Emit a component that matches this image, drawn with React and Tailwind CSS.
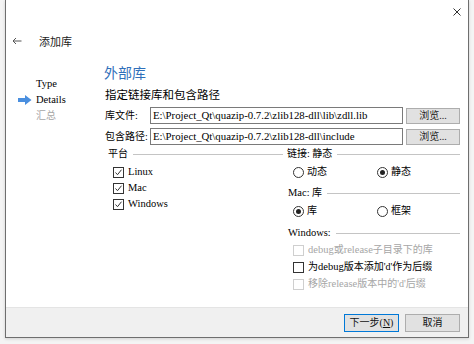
import React from 'react';

const L = ({ children }) => <span className="text-[10.5px] font-['Liberation_Serif',serif]">{children}</span>;

const Check = ({ checked, disabled }) => (
    <span className={`w-[11px] h-[11px] border ${disabled ? 'border-[#cfcfcf]' : 'border-[#333333]'} bg-white flex items-center justify-center shrink-0`}>
        {checked && (
            <svg width="9" height="9" viewBox="0 0 9 9">
                <path d="M1.5 4.5l2 2.2 4-5" stroke="#333" fill="none" strokeWidth="1" />
            </svg>
        )}
    </span>
);

const Radio = ({ checked }) => (
    <span className="w-[11px] h-[11px] rounded-full border border-[#333333] bg-white flex items-center justify-center shrink-0">
        {checked && <span className="w-[5px] h-[5px] rounded-full bg-[#222222]" />}
    </span>
);

const GroupTitle = ({ children }) => (
    <div className="flex items-center h-[14px]">
        <span className="whitespace-nowrap">{children}</span>
        <span className="flex-1 h-px bg-[#c4c4c4] ml-[5px]" />
    </div>
);

const CheckRow = ({ checked, disabled, children, className = '' }) => (
    <div className={`flex items-center gap-[4px] h-[16px] ${disabled ? 'text-[#a6a6a6]' : 'text-black'} ${className}`}>
        <Check checked={checked} disabled={disabled} />
        <span className="whitespace-nowrap">{children}</span>
    </div>
);

const RadioRow = ({ left, right, leftOn }) => (
    <div className="flex items-center h-[16px] pl-[6px]">
        <div className="w-[84px] flex items-center gap-[3px]">
            <Radio checked={leftOn} />
            <span>{left}</span>
        </div>
        <div className="flex items-center gap-[3px]">
            <Radio checked={!leftOn} />
            <span>{right}</span>
        </div>
    </div>
);

const PathRow = ({ label, value, className = '' }) => (
    <div className={`flex items-center h-[17px] ${className}`}>
        <span className="w-[45px] whitespace-nowrap">{label}</span>
        <div className="flex-1 h-[17px] border border-[#7a7a7a] bg-white flex items-center pl-[2px] overflow-hidden">
            <span className="text-[10.8px] font-['Liberation_Serif',serif] whitespace-nowrap">{value}</span>
        </div>
        <button className="ml-[3px] w-[54px] h-[16px] border border-[#adadad] bg-[#e1e1e1] text-[10px] text-[#222] flex items-center justify-center">
            浏览...
        </button>
    </div>
);

const App = () => {
    return (
        <div className="w-[474px] h-[344px] bg-[#f4f4f4] pl-[5px] font-['Liberation_Serif','Noto_Sans_CJK_SC',serif] text-[10px] text-black leading-none">
            <div className="w-[464px] h-[338px] bg-white border-x border-b border-[#6e6e6e] flex flex-col shadow-[0_1px_3px_rgba(0,0,0,0.15)]">
                <div className="flex-1 flex flex-col">
                    <div className="h-[24px] flex justify-end pt-[8px] pr-[7px]">
                        <svg width="8" height="8" viewBox="0 0 8 8">
                            <path d="M0.5 0.5l7 7M7.5 0.5l-7 7" stroke="#333" strokeWidth="1" />
                        </svg>
                    </div>
                    <div className="h-[34px] flex items-center pl-[6px]">
                        <svg width="10" height="8" viewBox="0 0 10 8">
                            <path d="M9.5 4H1M4 1L1 4l3 3" stroke="#555" strokeWidth="1" fill="none" />
                        </svg>
                        <span className="ml-[17px] font-['Noto_Sans_CJK_SC',sans-serif] text-[11px] text-[#222]">添加库</span>
                    </div>
                    <div className="flex">
                        <div className="w-[98px] pt-[18px] pl-[12px]">
                            <div className="flex items-center h-[16px] pl-[18px]">
                                <L>Type</L>
                            </div>
                            <div className="flex items-center h-[16px]">
                                <svg width="14" height="10" viewBox="0 0 14 10" className="mr-[4px]">
                                    <path d="M0 3h7V0l6.5 5L7 10V7H0z" fill="#4a8fdf" />
                                </svg>
                                <L>Details</L>
                            </div>
                            <div className="flex items-center h-[16px] pl-[18px] text-[#a6a6a6]">汇总</div>
                        </div>
                        <div className="flex-1 pr-[8px]">
                            <div className="mt-[4px] h-[20px] flex items-center font-['Noto_Sans_CJK_SC',sans-serif] text-[14px] text-[#2f6fba]">
                                外部库
                            </div>
                            <div className="mt-[6px] h-[16px] flex items-center pl-[1px] text-[11.5px]">指定链接库和包含路径</div>
                            <PathRow className="mt-[3px] pl-[1px]" label="库文件:" value="E:\Project_Qt\quazip-0.7.2\zlib128-dll\lib\zdll.lib" />
                            <PathRow className="mt-[4px] pl-[1px]" label="包含路径:" value="E:\Project_Qt\quazip-0.7.2\zlib128-dll\include" />
                            <div className="flex gap-[4px] mt-[2px]">
                                <div className="w-[179px] pl-[4px]">
                                    <GroupTitle>平台</GroupTitle>
                                    <div className="pl-[5px] mt-[3px]">
                                        <CheckRow checked><L>Linux</L></CheckRow>
                                        <CheckRow checked><L>Mac</L></CheckRow>
                                        <CheckRow checked><L>Windows</L></CheckRow>
                                    </div>
                                </div>
                                <div className="flex-1">
                                    <GroupTitle>链接: 静态</GroupTitle>
                                    <div className="mt-[3px]">
                                        <RadioRow left="动态" right="静态" leftOn={false} />
                                    </div>
                                    <div className="mt-[6px] pl-[1px]">
                                        <GroupTitle><L>Mac</L>: 库</GroupTitle>
                                    </div>
                                    <div className="mt-[3px]">
                                        <RadioRow left="库" right="框架" leftOn />
                                    </div>
                                    <div className="mt-[7px] pl-[1px]">
                                        <GroupTitle><L>Windows</L>:</GroupTitle>
                                    </div>
                                    <div className="mt-[2px] pl-[6px] flex flex-col gap-[1px]">
                                        <CheckRow disabled><L>debug</L>或<L>release</L>子目录下的库</CheckRow>
                                        <CheckRow>为<L>debug</L>版本添加'd'作为后缀</CheckRow>
                                        <CheckRow disabled>移除<L>release</L>版本中的'd'后缀</CheckRow>
                                    </div>
                                </div>
                            </div>
                        </div>
                    </div>
                </div>
                <div className="h-[30px] bg-[#f0f0f0] border-t border-[#e4e4e4] flex justify-end items-start pt-[6px] pr-[8px] gap-[6px]">
                    <button className="w-[55px] h-[18px] border border-[#0078d7] bg-[#e1e1e1] text-[10px] text-[#111] flex items-center justify-center">
                        下一步(<span className="underline">N</span>)
                    </button>
                    <button className="w-[55px] h-[18px] border border-[#adadad] bg-[#e1e1e1] text-[10px] text-[#111] flex items-center justify-center">
                        取消
                    </button>
                </div>
            </div>
        </div>
    );
};

export default App;
